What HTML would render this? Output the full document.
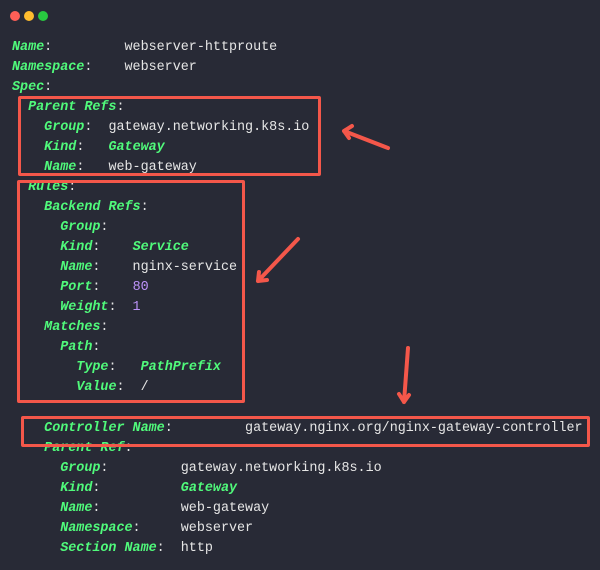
<!DOCTYPE html>
<html><head><meta charset="utf-8"><style>
html,body{margin:0;padding:0;background:#282a36;width:600px;height:570px;overflow:hidden}
pre{position:absolute;left:12px;margin:0;font-family:"Liberation Mono",monospace;font-size:13.4px;line-height:20px;color:#e6e6e6}
.k{color:#50fa7b;font-weight:bold;font-style:italic}
.n{color:#bd93f9}
.box{position:absolute;border:3px solid #f4574a;border-radius:2px;box-sizing:border-box}
.dot{position:absolute;top:11px;width:10px;height:10px;border-radius:50%}
</style></head><body>
<div class="dot" style="left:10px;background:#ff5f57"></div>
<div class="dot" style="left:24px;background:#febc2e"></div>
<div class="dot" style="left:38px;background:#28c840"></div>
<pre style="top:38px"><span class="k">Name</span>:         webserver-httproute
<span class="k">Namespace</span>:    webserver
<span class="k">Spec</span>:
  <span class="k">Parent Refs</span>:
    <span class="k">Group</span>:  gateway.networking.k8s.io
    <span class="k">Kind</span>:   <span class="k">Gateway</span>
    <span class="k">Name</span>:   web-gateway
  <span class="k">Rules</span>:
    <span class="k">Backend Refs</span>:
      <span class="k">Group</span>:
      <span class="k">Kind</span>:    <span class="k">Service</span>
      <span class="k">Name</span>:    nginx-service
      <span class="k">Port</span>:    <span class="n">80</span>
      <span class="k">Weight</span>:  <span class="n">1</span>
    <span class="k">Matches</span>:
      <span class="k">Path</span>:
        <span class="k">Type</span>:   <span class="k">PathPrefix</span>
        <span class="k">Value</span>:  /</pre>
<pre style="top:419px">    <span class="k">Controller Name</span>:         gateway.nginx.org/nginx-gateway-controller
    <span class="k">Parent Ref</span>:
      <span class="k">Group</span>:         gateway.networking.k8s.io
      <span class="k">Kind</span>:          <span class="k">Gateway</span>
      <span class="k">Name</span>:          web-gateway
      <span class="k">Namespace</span>:     webserver
      <span class="k">Section Name</span>:  http</pre>
<div class="box" style="left:18px;top:96px;width:303px;height:80px"></div>
<div class="box" style="left:17px;top:180px;width:228px;height:223px"></div>
<div class="box" style="left:21px;top:416px;width:569px;height:31px"></div>
<svg width="600" height="570" style="position:absolute;left:0;top:0" fill="none" stroke="#f4574a" stroke-width="4" stroke-linecap="round" stroke-linejoin="round">
<path d="M388 148 L344 131 M344 131 L352 126 M344 131 L349 138"/>
<path d="M298 239 L258 281 M258 281 L259 272 M258 281 L267 280"/>
<path d="M408 348 L404 402 M404 402 L399 394 M404 402 L409 395"/>
</svg>
</body></html>
